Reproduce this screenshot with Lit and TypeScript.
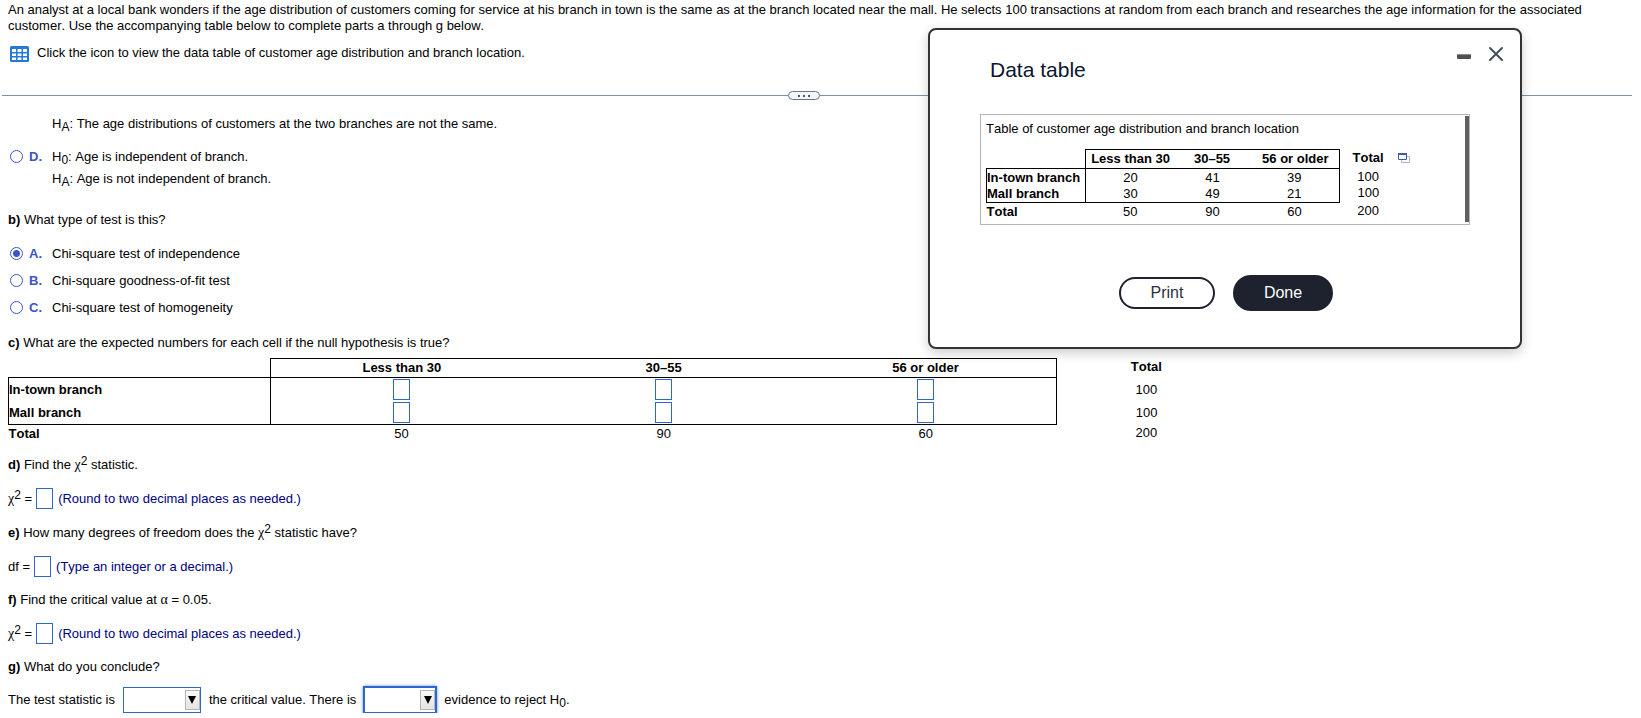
import { LitElement, html, css } from "lit";
import { customElement, property } from "lit/decorators.js";

const AGE_GROUPS = ["Less than 30", "30–55", "56 or older"];
const OBSERVED = [
  { branch: "In-town branch", counts: [20, 41, 39], total: 100 },
  { branch: "Mall branch", counts: [30, 49, 21], total: 100 },
];
const COLUMN_TOTALS = [50, 90, 60];
const GRAND_TOTAL = 200;

const TESTS = [
  { letter: "A", label: "Chi-square test of independence" },
  { letter: "B", label: "Chi-square goodness-of-fit test" },
  { letter: "C", label: "Chi-square test of homogeneity" },
];

const chi2 = html`<span class="greek">χ</span><sup>2</sup>`;

const sharedTable = css`
  table {
    border-collapse: collapse;
    line-height: 15px;
  }
  th, td {
    padding: 0;
    text-align: center;
  }
  .corner, .rowhead {
    text-align: left;
  }
  .top {
    height: 17px;
    padding-bottom: 1px;
    border-top: 1px solid #000;
    border-bottom: 1px solid #000;
  }
  .edge {
    border-top: 1px solid #000;
  }
  .left {
    border-left: 1px solid #000;
  }
  .right {
    border-right: 1px solid #000;
  }
  .bottom {
    border-bottom: 1px solid #000;
  }
  .raise {
    vertical-align: top;
  }
`;

@customElement("data-dialog")
export class DataDialog extends LitElement {
  static styles = [
    sharedTable,
    css`
      :host {
        display: flex;
        flex-direction: column;
        box-sizing: border-box;
        padding: 24px 50px 36px 50px;
        border: 2px solid #333;
        border-radius: 8px;
        background: #fff;
        box-shadow: 0 4px 12px rgba(0, 0, 0, 0.2);
      }
      .head {
        display: flex;
        justify-content: space-between;
        align-items: flex-start;
        padding-left: 10px;
        margin-right: -34px;
      }
      h2 {
        margin: 4px 0 0;
        font-size: 21px;
        font-weight: 400;
        line-height: 24px;
        color: #0b1530;
      }
      .tools {
        display: flex;
        gap: 17px;
        margin-top: -10px;
      }
      .tool {
        display: flex;
        padding: 0;
        border: 0;
        background: none;
      }
      .body {
        display: flex;
        justify-content: space-between;
        margin-top: 32px;
        padding: 1px 0 2px 5px;
        border: 1px solid #b4b4b4;
      }
      .thumb {
        width: 4px;
        background: #606060;
      }
      .caption {
        margin: 4px 0 12px;
        line-height: 17px;
      }
      .sheet {
        display: flex;
        align-items: flex-start;
        gap: 13px;
        padding-bottom: 3px;
      }
      .data th, .data td {
        height: 16px;
      }
      .data .top {
        height: 17px;
        padding-left: 5px;
        padding-right: 5px;
      }
      .data .bottom {
        height: 17px;
      }
      .data .rowhead {
        padding-right: 5px;
      }
      .data .mid {
        padding-left: 19px;
        padding-right: 20px;
      }
      .data .last {
        padding-left: 12px;
        padding-right: 10px;
      }
      .data .sum {
        padding-left: 13px;
      }
      .copy {
        display: flex;
        margin-top: 4px;
        padding: 0;
        border: 0;
        background: none;
      }
      .actions {
        display: flex;
        justify-content: center;
        align-items: center;
        gap: 18px;
        margin-top: 50px;
        padding-left: 2px;
      }
      .btn {
        font: 16px "Liberation Sans", Arial, sans-serif;
        border-radius: 18px;
      }
      .print {
        height: 32px;
        width: 96px;
        border: 2px solid #1d222e;
        background: #fff;
        color: #2b3040;
      }
      .done {
        height: 36px;
        width: 100px;
        border: 0;
        background: #1d222e;
        color: #fff;
      }
    `,
  ];

  render() {
    return html`
      <div class="head">
        <h2>Data table</h2>
        <div class="tools">
          <button class="tool" aria-label="Minimize">
            <svg width="14" height="18" viewBox="0 0 14 18">
              <rect x="0" y="10" width="14" height="5" rx="1" fill="#505050" />
              <rect x="0" y="10" width="14" height="1" fill="#8a8a8a" />
            </svg>
          </button>
          <button class="tool" aria-label="Close">
            <svg width="16" height="20" viewBox="0 0 16 20">
              <path d="M2 4 L14 16 M14 4 L2 16" stroke="#43505f" stroke-width="2" stroke-linecap="round" fill="none" />
            </svg>
          </button>
        </div>
      </div>
      <div class="body">
        <div>
          <p class="caption">Table of customer age distribution and branch location</p>
          <div class="sheet">
            <table class="data">
              <tr>
                <td class="corner"></td>
                <th class="top left">${AGE_GROUPS[0]}</th>
                <th class="top mid">${AGE_GROUPS[1]}</th>
                <th class="top right last">${AGE_GROUPS[2]}</th>
                <th class="sum raise">Total</th>
              </tr>
              ${OBSERVED.map((row, r) => {
                const b = r === OBSERVED.length - 1 ? "bottom" : "";
                return html`<tr>
                  <th class="rowhead left ${r === 0 ? "edge" : ""} ${b}">${row.branch}</th>
                  <td class="left ${b}">${row.counts[0]}</td>
                  <td class=${b}>${row.counts[1]}</td>
                  <td class="right ${b}">${row.counts[2]}</td>
                  <td class="sum raise">${row.total}</td>
                </tr>`;
              })}
              <tr>
                <th class="rowhead">Total</th>
                ${COLUMN_TOTALS.map((n) => html`<td>${n}</td>`)}
                <td class="sum raise">${GRAND_TOTAL}</td>
              </tr>
            </table>
            <button class="copy" aria-label="Open in spreadsheet">
              <svg width="12" height="10" viewBox="0 0 12 10">
                <path d="M3.5 3.5H11.5V9.5H3.5Z" fill="#fff" stroke="#a9b1dc" />
                <path d="M0.5 0.5H8.5V6.5H0.5Z" fill="#fff" stroke="#4459ae" />
                <path d="M0 1H9" stroke="#4459ae" stroke-width="2" />
              </svg>
            </button>
          </div>
        </div>
        <div class="thumb"></div>
      </div>
      <div class="actions">
        <button class="btn print">Print</button>
        <button class="btn done">Done</button>
      </div>
    `;
  }
}

@customElement("app-root")
export class AppRoot extends LitElement {
  @property() answer = "A";

  static styles = [
    sharedTable,
    css`
      :host {
        display: block;
        position: relative;
        font: 13px/16px "Liberation Sans", Arial, sans-serif;
        font-kerning: none;
        color: #000;
        background: #fff;
      }
      p {
        margin: 0;
      }
      .intro {
        padding: 2px 8px 0;
      }
      .open {
        display: flex;
        align-items: flex-start;
        gap: 8px;
        margin-top: 11px;
        padding: 0 2px;
      }
      .icon {
        display: flex;
        margin-top: 1px;
        padding: 0;
        border: 0;
        background: none;
      }
      .divider {
        display: flex;
        align-items: center;
        margin: 29px 9px 0 2px;
      }
      .rule {
        flex: 1;
        height: 1px;
        background: #8391a3;
      }
      .rule.short {
        flex: 0 0 48.2%;
      }
      .handle {
        display: flex;
        justify-content: center;
        align-items: center;
        gap: 3px;
        width: 32px;
        height: 9px;
        padding: 0;
        border: 1px solid #66758a;
        border-radius: 5px;
        background: #f4f6f8;
      }
      .dot {
        width: 2px;
        height: 2px;
        background: #4d5866;
      }
      .work {
        padding: 16px 8px 0;
      }
      sub, sup {
        font-size: 12px;
        line-height: 0;
      }
      sub {
        vertical-align: -3px;
      }
      sup {
        vertical-align: 4px;
      }
      .greek {
        font-family: "Liberation Serif", "Times New Roman", serif;
        font-size: 14px;
        line-height: 0;
      }
      .choice {
        display: grid;
        grid-template-columns: 21px 23px auto;
        justify-content: start;
        align-items: start;
        line-height: 16px;
      }
      .choice .detail {
        grid-column: 3;
      }
      .choice input {
        appearance: none;
        width: 13px;
        height: 13px;
        margin: 1px 2px;
        border: 1px solid #3b55c8;
        border-radius: 50%;
      }
      .choice input:checked {
        background: radial-gradient(circle, #3b55c8 3px, #fff 4px);
      }
      .letter {
        font-weight: 700;
        color: #3b55c8;
      }
      .hyp {
        row-gap: 6px;
        margin-top: 17px;
      }
      .tests {
        display: grid;
        gap: 11px;
        margin: 18px 0 19px;
      }
      .partb {
        margin-top: 25px;
      }
      .box {
        box-sizing: border-box;
        width: 17px;
        height: 21px;
        padding: 0;
        margin: 0;
        border: 1px solid #2f66cb;
        background: #fff;
        font: inherit;
      }
      .expected {
        table-layout: fixed;
        width: 75.6%;
        margin-top: 7px;
      }
      .age {
        width: 21.35%;
      }
      .expected .foot {
        height: 17px;
      }
      .cell {
        height: 23px;
      }
      .cell .box {
        display: block;
        margin: 1px auto;
      }
      .first {
        margin-top: 15px;
      }
      .fill {
        display: flex;
        align-items: center;
        gap: 4px;
        height: 21px;
        margin-top: 15px;
      }
      .hint {
        margin-left: 1px;
        color: #000080;
      }
      .after {
        margin-top: 15px;
      }
      .raised {
        padding-top: 1px;
      }
      .conclude {
        display: flex;
        align-items: center;
        gap: 8px;
        margin-top: 12px;
      }
      .pick {
        position: relative;
        display: flex;
      }
      .pick select {
        appearance: none;
        width: 78px;
        height: 26px;
        border: 1px solid #2f66cb;
        border-radius: 0;
        background: #fff;
        font: inherit;
        outline: 0;
      }
      .pick.active select {
        width: 72px;
        box-shadow: 0 0 0 1px #2f66cb, 0 0 3px 1px #5c8fe8;
      }
      .arrow {
        position: absolute;
        top: 3px;
        right: 1px;
        display: flex;
        align-items: center;
        justify-content: center;
        box-sizing: border-box;
        width: 15px;
        height: 20px;
        border: 1px solid #b5b5b5;
        background: linear-gradient(#f8f8f8, #e4e4e4);
        pointer-events: none;
      }
      .modal {
        position: absolute;
        top: 28px;
        right: 119px;
        width: 594px;
        height: 321px;
      }
    `,
  ];

  private arrow() {
    return html`<span class="arrow"><svg width="8" height="8" viewBox="0 0 8 8"><path d="M0 0H8L4 8Z" /></svg></span>`;
  }

  private expectedTable() {
    return html`<table class="expected">
      <colgroup>
        <col class="age" /><col class="age" /><col class="age" /><col class="age" /><col />
      </colgroup>
      <tr>
        <td class="corner"></td>
        ${AGE_GROUPS.map(
          (g, i) => html`<th class="top ${i === 0 ? "left" : ""} ${i === 2 ? "right" : ""}">${g}</th>`
        )}
        <th class="raise">Total</th>
      </tr>
      ${OBSERVED.map((row, r) => {
        const b = r === 1 ? "bottom" : "";
        return html`<tr>
          <th class="rowhead left ${r === 0 ? "edge" : ""} ${b}">${row.branch}</th>
          ${AGE_GROUPS.map(
            (g, i) => html`<td class="cell ${i === 0 ? "left" : ""} ${i === 2 ? "right" : ""} ${b}">
              <input class="box" aria-label="${row.branch}, ${g}" />
            </td>`
          )}
          <td>${row.total}</td>
        </tr>`;
      })}
      <tr>
        <th class="rowhead foot">Total</th>
        ${COLUMN_TOTALS.map((n) => html`<td>${n}</td>`)}
        <td class="raise">${GRAND_TOTAL}</td>
      </tr>
    </table>`;
  }

  render() {
    return html`
      <header class="intro">
        <p>
          An analyst at a local bank wonders if the age distribution of customers coming for service at his branch in
          town is the same as at the branch located near the mall. He selects 100 transactions at random from each
          branch and researches the age information for the associated customer. Use the accompanying table below to
          complete parts a through g below.
        </p>
        <div class="open">
          <button class="icon" aria-label="View data table">
            <svg width="19" height="16" viewBox="0 0 19 16">
              <rect width="19" height="16" rx="1.5" fill="#2478d8" />
              <path
                d="M2 3h4v3h-4z M7.500 3h4v3h-4z M13 3h4v3h-4z M2 7.500h4v2.500h-4z M7.500 7.500h4v2.500h-4z M13 7.500h4v2.500h-4z M2 11.500h4v2.500h-4z M7.500 11.500h4v2.500h-4z M13 11.500h4v2.500h-4z"
                fill="#fff"
              />
            </svg>
          </button>
          <p>Click the icon to view the data table of customer age distribution and branch location.</p>
        </div>
      </header>

      <div class="divider">
        <div class="rule short"></div>
        <button class="handle" aria-label="Resize">
          <span class="dot"></span><span class="dot"></span><span class="dot"></span>
        </button>
        <div class="rule"></div>
      </div>

      <main class="work">
        <div class="choice">
          <span class="detail">H<sub>A</sub>: The age distributions of customers at the two branches are not the same.</span>
        </div>
        <label class="choice hyp">
          <input type="radio" name="hypotheses" />
          <span class="letter">D.</span>
          <span>H<sub>0</sub>: Age is independent of branch.</span>
          <span class="detail">H<sub>A</sub>: Age is not independent of branch.</span>
        </label>

        <p class="partb"><b>b)</b> What type of test is this?</p>
        <div class="tests">
          ${TESTS.map(
            (t) => html`<label class="choice">
              <input type="radio" name="test" .checked=${t.letter === this.answer} />
              <span class="letter">${t.letter}.</span>
              <span>${t.label}</span>
            </label>`
          )}
        </div>

        <p><b>c)</b> What are the expected numbers for each cell if the null hypothesis is true?</p>
        ${this.expectedTable()}

        <p class="first"><b>d)</b> Find the ${chi2} statistic.</p>
        <label class="fill">
          <span>${chi2} =</span><input class="box" /><span class="hint">(Round to two decimal places as needed.)</span>
        </label>

        <p class="after raised"><b>e)</b> How many degrees of freedom does the ${chi2} statistic have?</p>
        <label class="fill">
          <span>df =</span><input class="box" /><span class="hint">(Type an integer or a decimal.)</span>
        </label>

        <p class="after"><b>f)</b> Find the critical value at <span class="greek">α</span> = 0.05.</p>
        <label class="fill">
          <span>${chi2} =</span><input class="box" /><span class="hint">(Round to two decimal places as needed.)</span>
        </label>

        <p class="after"><b>g)</b> What do you conclude?</p>
        <div class="conclude">
          <span>The test statistic is</span>
          <span class="pick">
            <select aria-label="Comparison"><option></option></select>${this.arrow()}
          </span>
          <span>the critical value. There is</span>
          <span class="pick active">
            <select aria-label="Evidence"><option></option></select>${this.arrow()}
          </span>
          <span>evidence to reject H<sub>0</sub>.</span>
        </div>
      </main>

      <data-dialog class="modal" role="dialog" aria-label="Data table"></data-dialog>
    `;
  }
}
